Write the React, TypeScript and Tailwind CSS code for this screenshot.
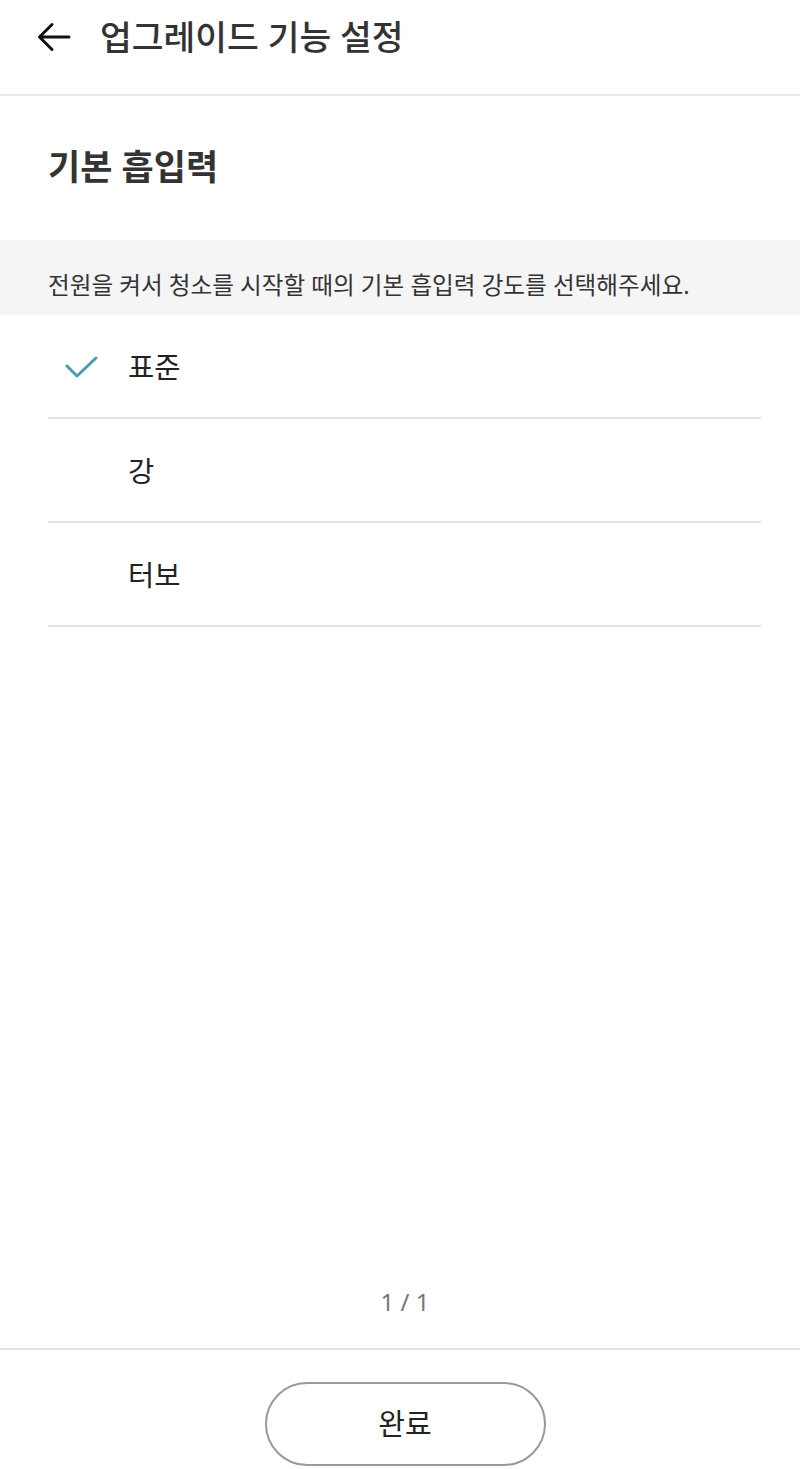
const OPTIONS = ['표준', '강', '터보'];

export default function App() {
  const selected = '표준';

  return (
    <div
      className="flex h-[1469px] w-[800px] flex-col bg-white text-[#222]"
      style={{ fontFamily: '"Noto Sans", "Noto Sans CJK KR", sans-serif' }}
    >
      {/* 상단 바 */}
      <header className="flex h-[96px] shrink-0 items-center border-b-2 border-[#e8e8e8] pb-[20px]">
        <button className="ml-[37px] flex items-center text-[#111]">
          <svg width="34" height="30" viewBox="0 0 34 30" fill="none">
            <path
              d="M32 15 H3 M15 2.5 L2.5 15 L15 27.5"
              stroke="currentColor"
              strokeWidth="3"
              strokeLinecap="round"
              strokeLinejoin="round"
            />
          </svg>
        </button>
        <h1 className="ml-[29px] text-[34.5px] font-medium text-[#333]">
          업그레이드 기능 설정
        </h1>
      </header>

      <h2 className="flex h-[144px] items-center px-[48px] pb-[2px] text-[35px] font-bold text-[#333]">
        기본 흡입력
      </h2>

      <div className="flex h-[75px] items-center bg-[#f5f5f5] px-[48px] pt-[17px]">
        <p className="text-[23.6px] text-[#333]">
          전원을 켜서 청소를 시작할 때의 기본 흡입력 강도를 선택해주세요.
        </p>
      </div>

      <ul className="pl-[48px] pr-[39px]">
        {OPTIONS.map((o) => (
          <li
            key={o}
            className="flex h-[104px] items-center border-b-2 border-[#e4e4e4] pt-[2px]"
          >
            <span className="flex w-[80px] items-center pl-[17px] pt-[2px]">
              {o === selected && (
                <svg width="34" height="26" viewBox="0 0 34 26" fill="none">
                  <path
                    d="M2 11 L12 21 L31 3"
                    stroke="#4a9db0"
                    strokeWidth="3"
                    strokeLinecap="round"
                    strokeLinejoin="round"
                  />
                </svg>
              )}
            </span>
            <span className="text-[28.5px] text-[#222]">{o}</span>
          </li>
        ))}
      </ul>

      <div className="flex-1" />

      <div className="pb-[28px] pl-[10px] text-center text-[24px] text-[#777]">1 / 1</div>

      <footer className="flex h-[121px] shrink-0 justify-center border-t-2 border-[#e4e4e4] pl-[10px] pt-[32px]">
        <button className="flex h-[84px] w-[281px] items-center justify-center rounded-full border-2 border-[#999] text-[29px] text-[#222]">
          완료
        </button>
      </footer>
    </div>
  );
}
